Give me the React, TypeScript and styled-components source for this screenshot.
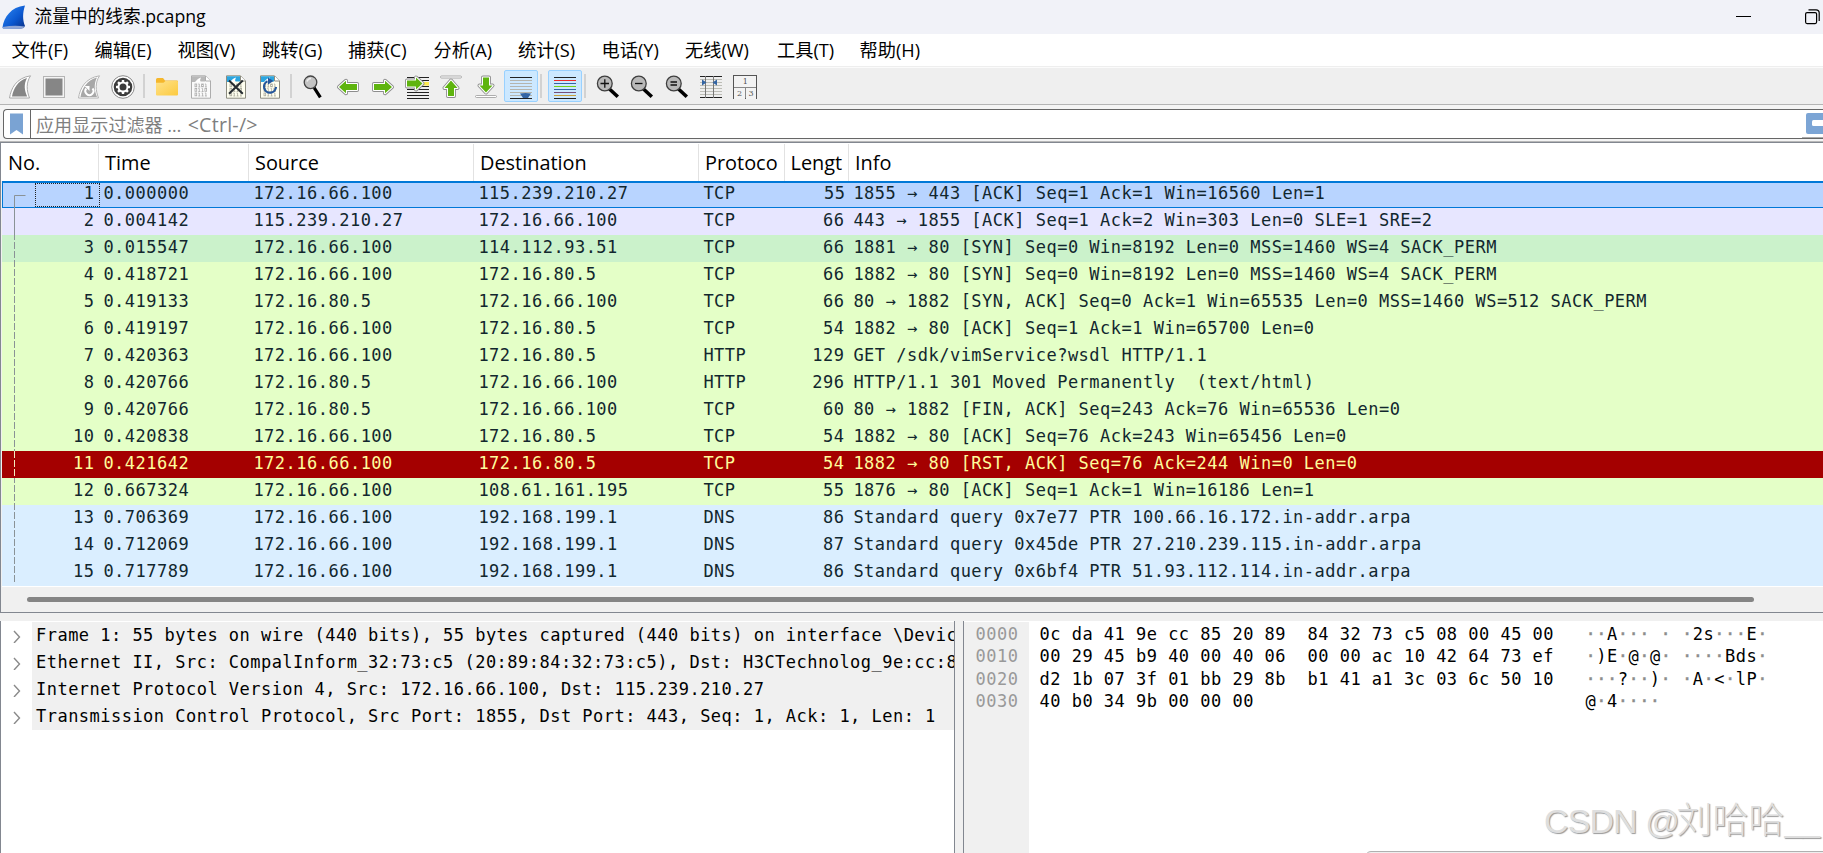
import React from "react";
import styled, { createGlobalStyle, css } from "styled-components";

const ui = `"Open Sans", "Noto Sans CJK SC", sans-serif`;
const mono = `"DejaVu Sans Mono", monospace`;

const Global = createGlobalStyle`
  * { box-sizing: border-box; }
  html, body { margin: 0; background: #f0f0f0; overflow: hidden; }
`;

const Window = styled.div`
  position: relative;
  width: 1823px;
  height: 853px;
  overflow: hidden;
  display: flex;
  flex-direction: column;
  background: #f0f0f0;
  font-family: ${ui};
  color: #000;
`;

const TitleBar = styled.header`
  height: 34px;
  flex: none;
  display: flex;
  align-items: center;
  background: #f1f2f8;
  padding: 0 3px 0 2px;
`;
const Title = styled.span`
  flex: 1;
  margin-left: 8.5px;
  font-size: 17.7px;
  line-height: 33px;
  height: 34px;
  white-space: nowrap;
`;
const WindowControls = styled.div`
  display: flex;
  align-items: center;
  gap: 54px;
`;

const MenuBar = styled.nav`
  height: 34px;
  flex: none;
  display: flex;
  background: #fff;
  border-bottom: 1px solid #fbfbfb;
  box-shadow: inset 0 -1px 0 #eee;
  padding-left: 11.5px;
`;
const MenuItem = styled.span<{ $w: number }>`
  width: ${(p) => p.$w}px;
  flex: none;
  font-size: 18.2px;
  line-height: 33px;
  white-space: nowrap;
`;

const ToolBar = styled.div`
  height: 37px;
  flex: none;
  display: flex;
  align-items: center;
  padding-left: 2.8px;
  background: #efefef;
  border-bottom: 1px solid #b4b4b4;
`;
const ToolButton = styled.button<{ $on?: boolean }>`
  width: 34.4px;
  height: 32px;
  flex: none;
  display: flex;
  align-items: center;
  justify-content: center;
  border: 1px solid transparent;
  border-radius: 2px;
  background: none;
  padding: 2px 0 0;
  ${(p) =>
    p.$on &&
    css`
      background: #cce8ff;
      border-color: #99d1ff;
      margin: 0 -0.8px 0 0.8px;
    `}
`;
const ToolSep = styled.i`
  width: 9.4px;
  flex: none;
  display: flex;
  &::before {
    content: "";
    width: 2px;
    height: 24px;
    margin-left: 3px;
    background: #d2d2d2;
  }
`;

const FilterArea = styled.div`
  height: 37px;
  flex: none;
  padding: 4px 0 2px 3px;
  background: #f4f4f4;
  border-bottom: 1px solid #b8b8b8;
`;
const FilterBox = styled.div`
  height: 30px;
  display: flex;
  border: 1px solid #666;
  border-right: 0;
  border-radius: 4px 0 0 4px;
  background: #fff;
`;
const BookmarkSlot = styled.div`
  width: 27px;
  display: flex;
  align-items: center;
  justify-content: center;
  padding-right: 1px;
  border-right: 1px solid #666;
`;
const Placeholder = styled.span`
  flex: 1;
  padding-left: 5px;
  font-size: 18.1px;
  line-height: 30px;
  height: 28px;
  color: #7f7f7f;
  white-space: pre;
`;
const Shortcut = styled.span`
  margin-left: 1.5px;
  font-size: 19.6px;
  letter-spacing: 0.25px;
`;
const ClearSlot = styled.div`
  width: 21px;
  display: flex;
  align-items: center;
  padding-left: 4px;
  border-bottom: 1px solid #aaa;
`;

const PacketList = styled.section`
  height: 471px;
  flex: none;
  display: flex;
  flex-direction: column;
  position: relative;
  border-top: 1px solid #828790;
  border-left: 1px solid #828790;
  border-bottom: 1px solid #828790;
  padding-left: 1px;
  background: #f0f0f0;
`;
const columns = "97px 150px 225px 225px 85.5px 64.5px 1fr";
const HeaderRow = styled.div`
  display: grid;
  grid-template-columns: ${columns};
  height: 38px;
  margin-left: -1px;
  padding-left: 1px;
  flex: none;
  background: #fff;
`;
const HeaderCell = styled.div`
  padding-left: 6px;
  margin-top: 1px;
  border-right: 1px solid #e2e2e2;
  font-size: 19.9px;
  line-height: 37px;
  white-space: nowrap;
  overflow: hidden;
  &:last-child { border-right: 0; }
`;
const Row = styled.div<{ $bg: string; $fg: string; $sel?: boolean }>`
  display: grid;
  grid-template-columns: ${columns};
  height: 27px;
  flex: none;
  background: ${(p) => p.$bg};
  color: ${(p) => p.$fg};
  border: ${(p) => (p.$sel ? "solid #0078d7" : "0 solid")};
  border-width: ${(p) => (p.$sel ? "2px 0 1px 1px" : 0)};
`;
const Cell = styled.div<{ $right?: boolean; $sel?: boolean }>`
  font-family: ${mono};
  font-size: 17px;
  letter-spacing: 0.49px;
  line-height: ${(p) => (p.$sel ? 21 : 24)}px;
  padding-left: ${(p) => (p.$sel ? 3.4 : 4.4)}px;
  padding-right: ${(p) => (p.$right ? 4.5 : 0)}px;
  text-align: ${(p) => (p.$right ? "right" : "left")};
  white-space: pre;
`;
const FocusCell = styled(Cell)`
  margin-left: 32px;
  outline: 1px dotted #222;
  outline-offset: -1px;
  padding-right: 5.5px;
`;
const Relation = styled.svg`
  position: absolute;
  left: 0;
  top: 38px;
`;
const ScrollTrack = styled.div`
  flex: 1;
  border-top: 1px solid #fff;
  padding: 10px 69px 0 25px;
`;
const ScrollThumb = styled.div`
  height: 5px;
  border-radius: 3px;
  background: #858585;
`;

const LowerPanes = styled.main`
  flex: 1;
  display: flex;
  padding-top: 8px;
  min-height: 0;
`;
const Details = styled.section`
  width: 955px;
  flex: none;
  padding-top: 1px;
  border-left: 1px solid #828790;
  border-right: 1px solid #828790;
  background: #fff;
  overflow: hidden;
`;
const DetailRow = styled.div`
  height: 27px;
  display: flex;
  align-items: center;
  padding-left: 12px;
`;
const DetailText = styled.span`
  flex: 1;
  margin-left: 11px;
  padding-left: 4px;
  background: #f0f0f0;
  font-family: ${mono};
  font-size: 17px;
  letter-spacing: 0.477px;
  line-height: 26px;
  height: 27px;
  white-space: pre;
  overflow: hidden;
`;
const Bytes = styled.section`
  flex: 1;
  margin-left: 8px;
  display: flex;
  border-left: 1px solid #828790;
  background: #fff;
  font-family: ${mono};
  font-size: 17px;
  letter-spacing: 0.485px;
  line-height: 22.4px;
  white-space: pre;
`;
const Offsets = styled.div`
  width: 65px;
  margin-top: 1px;
  padding: 1px 0 0 11.5px;
  background: #f0f0f0;
  color: #999;
`;
const Hex = styled.div`
  width: 546px;
  margin: 2px 0 0 10.5px;
`;
const Ascii = styled.div`
  margin-top: 2px;
`;
const Dot = styled.span`
  color: #8c8c8c;
  -webkit-text-stroke: 0.4px #8c8c8c;
`;
const Watermark = styled.div`
  position: absolute;
  left: 1544px;
  top: 794px;
  display: flex;
  font-family: "Liberation Sans", "Noto Sans CJK SC", sans-serif;
  font-weight: 300;
  font-size: 36px;
  line-height: 54px;
  color: #dedede;
  text-shadow: 1px 1px 1px #999;
  white-space: pre;
`;
const WatermarkLatin = styled.span`
  width: 132.5px;
  font-size: 34px;
  letter-spacing: -0.9px;
`;
const WatermarkTail = styled.span`
  font-size: 32px;
`;
const PopupEdge = styled.div`
  position: absolute;
  left: 1365px;
  right: -12px;
  top: 851px;
  height: 12px;
  border: 1px solid #b0b0b0;
  border-radius: 8px;
  background: #eee;
`;

const Svg = ({ children }: { children: React.ReactNode }) => (
  <svg width="24" height="24" viewBox="0 0 24 24" fill="none">{children}</svg>
);
const fin = "M1.500 23C3 13.500 8 3 22.500 .8C18 8 18.500 15 21.500 23Z";
const finCore = "M4 21.500C5.500 13.500 9.500 6 19 3C15.500 9.500 16.500 15.500 19.200 21.500Z";

const StartIcon = () => (
  <Svg>
    <path d={fin} fill="#fff" stroke="#aaa" />
    <path d={finCore} fill="#868686" />
  </Svg>
);
const StopIcon = () => (
  <Svg>
    <rect x="1.500" y="1.500" width="21" height="21" fill="#f4f4f4" stroke="#b4b4b4" />
    <rect x="3.500" y="3.500" width="17" height="17" fill="#868686" />
  </Svg>
);
const RestartIcon = () => (
  <Svg>
    <path d={fin} fill="#fff" stroke="#b4b4b4" />
    <path d="M3.500 22C5 13.500 9.500 5.500 20 2.500C16.500 9.500 17.500 15.500 20 22Z" fill="#a8a8a8" />
    <path d="M9.300 13.500a4 4 0 1 0 6.200 0" stroke="#fff" strokeWidth="2" />
    <path d="M7.500 11h5v5z" fill="#fff" />
  </Svg>
);
const OptionsIcon = () => (
  <Svg>
    <circle cx="12" cy="12" r="11.300" fill="#fff" stroke="#8a8a8a" />
    <circle cx="12" cy="12" r="9.300" fill="#3c3c3c" />
    <circle cx="12" cy="12" r="4.500" stroke="#fff" strokeWidth="2" />
    {[0, 45, 90, 135, 180, 225, 270, 315].map((a) => (
      <path key={a} d="M12 7.500V5" stroke="#fff" strokeWidth="2.400" transform={`rotate(${a} 12 12)`} />
    ))}
  </Svg>
);
const FolderIcon = () => (
  <Svg>
    <path d="M1 4.500Q1 3 2.500 3H8L10 5.500H22Q23 5.500 23 6.500V10H1Z" fill="#f5b72c" />
    <path d="M1 7.800H8.500L10.500 6H22Q23 6 23 7V19.500Q23 20.500 22 20.500H2Q1 20.500 1 19.500Z" fill="url(#fold)" />
    <defs>
      <linearGradient id="fold" x1="0" y1="0" x2="1" y2="1">
        <stop stopColor="#ffe28a" />
        <stop offset="1" stopColor="#fcca3f" />
      </linearGradient>
    </defs>
  </Svg>
);
const FileIcon = ({ grey, children }: { grey?: boolean; children?: React.ReactNode }) => (
  <Svg>
    <path d="M2.500 .8H16.500L21.500 6V23.200H2.500Z" fill={grey ? "#fafafa" : "#fffff0"} stroke={grey ? "#adadad" : "#8c8c80"} />
    <path d="M3 1.300H16V6.500H11.500Q9 4 6 7H3Z" fill={grey ? "#b8b8b8" : "#2ba5e0"} />
    <path d="M6.500 7Q8 3.500 12 2.500Q10.500 5 11.500 7Z" fill="#fff" />
    <path d="M16.500 1V6H21.500" fill="#fff" stroke={grey ? "#adadad" : "#8c8c80"} />
    <g stroke={grey ? "#aaa" : "#a9a99b"} strokeWidth=".8">
      {[9, 13.5, 18].map((y, r) =>
        [0, 1, 2, 3].map((c) => {
          const x = 6 + c * 3.3;
          const zero = [c % 2 === 0, c === 0 || c === 3, c === 0][r];
          return zero ? <rect key={`${r}${c}`} x={x} y={y} width="1.700" height="2.800" /> : <path key={`${r}${c}`} d={`M${x} ${y}h1v3M${x} ${y + 3}h2`} />;
        })
      )}
    </g>
    {children}
  </Svg>
);
const CloseMark = () => <path d="M5 5.500L18.800 18.800M18.800 5.500L5 18.800" stroke="#262c31" strokeWidth="2" />;
const ReloadMark = () => (
  <>
    <path d="M9.500 6.200A6 6 0 1 0 18 12" stroke="#24579b" strokeWidth="2.200" />
    <path d="M10 2.500V9.500L15.500 6Z" fill="#24579b" />
  </>
);
const Lens = ({ mark }: { mark?: string }) => (
  <Svg>
    <path d="M14 14.500L20.500 20.500" stroke="#000" strokeWidth="3.600" strokeLinecap="square" />
    <circle cx="8.800" cy="8.500" r="7.400" fill="#b9b9b9" stroke="#3e3e3e" strokeWidth="1.300" />
    {mark && <path d={mark} stroke="#111" strokeWidth="1.300" />}
  </Svg>
);
const FindIcon = () => (
  <Svg>
    <path d="M13 14L17.500 21" stroke="#000" strokeWidth="3.200" strokeLinecap="square" />
    <circle cx="8.500" cy="7.300" r="6.300" fill="#c4c4c4" stroke="#444" strokeWidth="1.300" />
    <path d="M5 6.500Q6 3.500 9 3.500" stroke="#eee" strokeWidth="1.500" />
  </Svg>
);
const GreenArrow = ({ d }: { d: string }) => (
  <>
    <path d={d} fill="#fff" stroke="#8d8d8d" strokeWidth="4" strokeLinejoin="round" />
    <path d={d} fill="#5fb40f" stroke="#fff" strokeWidth="2.200" strokeLinejoin="round" />
    <path d={d} fill="#5fb40f" />
  </>
);
const BackIcon = () => <Svg><GreenArrow d="M3 12L10 5.800V9H21V15H10V18.200Z" /></Svg>;
const NextIcon = () => <Svg><GreenArrow d="M21 12L14 5.800V9H3V15H14V18.200Z" /></Svg>;
const GotoIcon = () => (
  <Svg>
    <path d="M2 2.500H24M2 14.500H24M2 17.500H24M2 20.500H24M2 23.500H24" stroke="#222" />
    <path d="M2 5.500H24M15 11.500H24" stroke="#222" />
    <rect x="15" y="7" width="9" height="3.500" fill="#fce94f" />
    <GreenArrow d="M17.500 8.500L11 2.500V5.500H2V11.500H11V14.500Z" />
  </Svg>
);
const FirstIcon = () => (
  <Svg>
    <rect x="1.500" y="1" width="21" height="2" rx="1" fill="#fff" stroke="#999" strokeWidth=".8" />
    <GreenArrow d="M12 5.500L18.500 13H15V21H9V13H5.500Z" />
  </Svg>
);
const LastIcon = () => (
  <Svg>
    <rect x="1.500" y="20.500" width="21" height="2" rx="1" fill="#fff" stroke="#999" strokeWidth=".8" />
    <GreenArrow d="M12 17.500L18.500 10.500H15V2.500H9V10.500H5.500Z" />
  </Svg>
);
const AutoScrollIcon = () => (
  <Svg>
    <path d="M1 2.500H23M1 23.500H23" stroke="#222" />
    <path d="M1 5.500H23M1 8.500H23M1 11.500H23M1 14.500H23M1 17.500H23M1 20.500H23" stroke="#b5b5ad" />
    <path d="M11 18.500Q16.500 17.500 22 18.500L19 23H14Z" fill="#3465a4" />
  </Svg>
);
const ColorizeIcon = () => (
  <Svg>
    {["#222", "#ef2929", "#3465a4", "#73d216", "#3465a4", "#75507b", "#c9a13b", "#222"].map((c, i) => (
      <path key={i} d={`M1 ${2.5 + i * 3}H23`} stroke={c} />
    ))}
  </Svg>
);
const ColumnsIcon = () => (
  <Svg>
    <path d="M1 1.500H23M1 22.500H23" stroke="#222" />
    <path d="M1 4.500H23M1 7.500H23M1 10.500H23M1 13.500H23M1 16.500H23M1 19.500H23" stroke="#bdbdb6" />
    <path d="M6.500 1V23M14.500 1V23" stroke="#777" />
    <path d="M3 4.500L7.500 7.500L3 10.500ZM18 4.500L13.500 7.500L18 10.500Z" fill="#3465a4" />
  </Svg>
);
const LayoutGlyph = styled.span`
  width: 24px;
  height: 24px;
  display: grid;
  grid-template-columns: 1fr 1fr;
  gap: 1px;
  border: 1px solid #555;
  background: #888;
  font: 8px/11px "DejaVu Serif", serif;
  color: #555;
  text-align: center;
  & > b { font-weight: 400; background: #f3f3f3; }
  & > b:first-child { grid-column: 1 / 3; }
`;

const green = "#e4ffc7";
const blue = "#daeeff";
const ink = "#12272e";
type Packet = [string, string, string, string, string, string, string, string];
const packets: Packet[] = [
  ["1", "0.000000", "172.16.66.100", "115.239.210.27", "TCP", "55", "1855 → 443 [ACK] Seq=1 Ack=1 Win=16560 Len=1", "#b8d4ff"],
  ["2", "0.004142", "115.239.210.27", "172.16.66.100", "TCP", "66", "443 → 1855 [ACK] Seq=1 Ack=2 Win=303 Len=0 SLE=1 SRE=2", "#e7e6ff"],
  ["3", "0.015547", "172.16.66.100", "114.112.93.51", "TCP", "66", "1881 → 80 [SYN] Seq=0 Win=8192 Len=0 MSS=1460 WS=4 SACK_PERM", "#cbf2cb"],
  ["4", "0.418721", "172.16.66.100", "172.16.80.5", "TCP", "66", "1882 → 80 [SYN] Seq=0 Win=8192 Len=0 MSS=1460 WS=4 SACK_PERM", green],
  ["5", "0.419133", "172.16.80.5", "172.16.66.100", "TCP", "66", "80 → 1882 [SYN, ACK] Seq=0 Ack=1 Win=65535 Len=0 MSS=1460 WS=512 SACK_PERM", green],
  ["6", "0.419197", "172.16.66.100", "172.16.80.5", "TCP", "54", "1882 → 80 [ACK] Seq=1 Ack=1 Win=65700 Len=0", green],
  ["7", "0.420363", "172.16.66.100", "172.16.80.5", "HTTP", "129", "GET /sdk/vimService?wsdl HTTP/1.1", green],
  ["8", "0.420766", "172.16.80.5", "172.16.66.100", "HTTP", "296", "HTTP/1.1 301 Moved Permanently  (text/html)", green],
  ["9", "0.420766", "172.16.80.5", "172.16.66.100", "TCP", "60", "80 → 1882 [FIN, ACK] Seq=243 Ack=76 Win=65536 Len=0", green],
  ["10", "0.420838", "172.16.66.100", "172.16.80.5", "TCP", "54", "1882 → 80 [ACK] Seq=76 Ack=243 Win=65456 Len=0", green],
  ["11", "0.421642", "172.16.66.100", "172.16.80.5", "TCP", "54", "1882 → 80 [RST, ACK] Seq=76 Ack=244 Win=0 Len=0", "#a40000"],
  ["12", "0.667324", "172.16.66.100", "108.61.161.195", "TCP", "55", "1876 → 80 [ACK] Seq=1 Ack=1 Win=16186 Len=1", green],
  ["13", "0.706369", "172.16.66.100", "192.168.199.1", "DNS", "86", "Standard query 0x7e77 PTR 100.66.16.172.in-addr.arpa", blue],
  ["14", "0.712069", "172.16.66.100", "192.168.199.1", "DNS", "87", "Standard query 0x45de PTR 27.210.239.115.in-addr.arpa", blue],
  ["15", "0.717789", "172.16.66.100", "192.168.199.1", "DNS", "86", "Standard query 0x6bf4 PTR 51.93.112.114.in-addr.arpa", blue],
];

const menus: [string, number][] = [
  ["文件(F)", 83], ["编辑(E)", 83], ["视图(V)", 84.5], ["跳转(G)", 86], ["捕获(C)", 85.5], ["分析(A)", 84.5],
  ["统计(S)", 83.5], ["电话(Y)", 83.5], ["无线(W)", 92], ["工具(T)", 82.5], ["帮助(H)", 80],
];

const tools: (React.ReactNode | "|")[] = [
  <StartIcon />, <StopIcon />, <RestartIcon />, <OptionsIcon />, "|",
  <FolderIcon />, <FileIcon grey />, <FileIcon><CloseMark /></FileIcon>, <FileIcon><ReloadMark /></FileIcon>, "|",
  <FindIcon />, <BackIcon />, <NextIcon />, <GotoIcon />, <FirstIcon />, <LastIcon />, <AutoScrollIcon />, "|",
  <ColorizeIcon />, "|",
  <Lens mark="M4.500 8.500H13M8.800 4.200V12.800" />, <Lens mark="M5 8.500H12.500" />, <Lens mark="M5.500 7H12M5.500 10H12" />,
  <ColumnsIcon />, <LayoutGlyph><b>1</b><b>2</b><b>3</b></LayoutGlyph>,
];
const pressed = [16, 18];

const details = [
  "Frame 1: 55 bytes on wire (440 bits), 55 bytes captured (440 bits) on interface \\Devic",
  "Ethernet II, Src: CompalInform_32:73:c5 (20:89:84:32:73:c5), Dst: H3CTechnolog_9e:cc:8",
  "Internet Protocol Version 4, Src: 172.16.66.100, Dst: 115.239.210.27",
  "Transmission Control Protocol, Src Port: 1855, Dst Port: 443, Seq: 1, Ack: 1, Len: 1",
];
const dump = [
  ["0000", "0c da 41 9e cc 85 20 89  84 32 73 c5 08 00 45 00", "··A··· · ·2s···E·"],
  ["0010", "00 29 45 b9 40 00 40 06  00 00 ac 10 42 64 73 ef", "·)E·@·@· ····Bds·"],
  ["0020", "d2 1b 07 3f 01 bb 29 8b  b1 41 a1 3c 03 6c 50 10", "···?··)· ·A·<·lP·"],
  ["0030", "40 b0 34 9b 00 00 00", "@·4····"],
];

export default function App() {
  return (
    <Window>
      <Global />
      <TitleBar>
        <svg width="24" height="24" viewBox="0 0 24 24">
          <defs>
            <linearGradient id="shark" x1="0" y1="0" x2="1" y2="1">
              <stop stopColor="#2f8af5" />
              <stop offset=".6" stopColor="#0b57cf" />
              <stop offset="1" stopColor="#0a2f86" />
            </linearGradient>
          </defs>
          <path d="M.5 22.500C2 12 9 2 23 .5C20.500 8 20.500 15 23 21Q22 23.500 19 23.500H1Z" fill="url(#shark)" />
          <path d="M.5 22Q12 20 22.800 21.500Q22 23.500 19 23.500H1Z" fill="#8fa6d6" />
        </svg>
        <Title>流量中的线索.pcapng</Title>
        <WindowControls>
          <svg width="15" height="16" viewBox="0 0 15 16"><path d="M0 7.500H15" stroke="#000" /></svg>
          <svg width="15" height="16" viewBox="0 0 15 16" fill="none" stroke="#000" strokeWidth="1.200">
            <rect x=".6" y="3.600" width="11" height="11" rx="1.500" />
            <path d="M3.500 .9H11Q14.200 .9 14.200 4V12" />
          </svg>
        </WindowControls>
      </TitleBar>
      <MenuBar>
        {menus.map(([t, w]) => <MenuItem key={t} $w={w}>{t}</MenuItem>)}
      </MenuBar>
      <ToolBar>
        {tools.map((t, i) => (t === "|" ? <ToolSep key={i} /> : <ToolButton key={i} $on={pressed.includes(i)}>{t}</ToolButton>))}
      </ToolBar>
      <FilterArea>
        <FilterBox>
          <BookmarkSlot>
            <svg width="13" height="22" viewBox="0 0 13 22"><path d="M0 .5H13V21.500L6.500 17L0 21.500Z" fill="#7aa3d3" /></svg>
          </BookmarkSlot>
          <Placeholder>应用显示过滤器 … <Shortcut>&lt;Ctrl-/&gt;</Shortcut></Placeholder>
          <ClearSlot>
            <svg width="17" height="21" viewBox="0 0 17 21">
              <path d="M2 0H17V21H2Q0 21 0 19V2Q0 0 2 0Z" fill="#7ca5d5" />
              <path d="M7.500 7H17V13H7.500Q6 13 6 11.500V8.500Q6 7 7.500 7Z" fill="#fff" />
            </svg>
          </ClearSlot>
        </FilterBox>
      </FilterArea>
      <PacketList>
        <HeaderRow>
          {["No.", "Time", "Source", "Destination", "Protoco", "Lengt", "Info"].map((h) => <HeaderCell key={h}>{h}</HeaderCell>)}
        </HeaderRow>
        {packets.map(([no, time, src, dst, proto, len, info, bg], i) => {
          const sel = i === 0;
          return (
            <Row key={no} $bg={bg} $fg={i === 10 ? "#fffc9c" : ink} $sel={sel}>
              {sel ? <FocusCell $right $sel>{no}</FocusCell> : <Cell $right>{no}</Cell>}
              <Cell $sel={sel}>{time}</Cell>
              <Cell $sel={sel}>{src}</Cell>
              <Cell $sel={sel}>{dst}</Cell>
              <Cell $sel={sel}>{proto}</Cell>
              <Cell $sel={sel} $right>{len}</Cell>
              <Cell $sel={sel}>{info}</Cell>
            </Row>
          );
        })}
        <Relation width="40" height="405" viewBox="0 0 40 405" fill="none" stroke="#8a9296">
          <path d="M24.500 14.500H13.500V59" />
          <path d="M13.500 61V403" strokeDasharray="7 2" />
          <path d="M13.500 270V297" stroke="#a40000" strokeWidth="2" />
          <path d="M13.500 270V297" stroke="#f3ecc0" strokeDasharray="7 2" />
        </Relation>
        <ScrollTrack><ScrollThumb /></ScrollTrack>
      </PacketList>
      <LowerPanes>
        <Details>
          {details.map((d) => (
            <DetailRow key={d}>
              <svg width="8" height="14" viewBox="0 0 8 14"><path d="M1 2L6.500 8L1 14" fill="none" stroke="#8a8a8a" strokeWidth="1.400" /></svg>
              <DetailText>{d}</DetailText>
            </DetailRow>
          ))}
        </Details>
        <Bytes>
          <Offsets>{dump.map(([o]) => <div key={o}>{o}</div>)}</Offsets>
          <Hex>{dump.map(([o, h]) => <div key={o}>{h}</div>)}</Hex>
          <Ascii>
            {dump.map(([o, , a]) => (
              <div key={o}>{a.split(/(·+)/).map((s, i) => (s.startsWith("·") ? <Dot key={i}>{s}</Dot> : s))}</div>
            ))}
          </Ascii>
        </Bytes>
      </LowerPanes>
      <Watermark>
        <WatermarkLatin>CSDN @</WatermarkLatin>
        <span>刘哈哈</span>
        <WatermarkTail>__</WatermarkTail>
      </Watermark>
      <PopupEdge />
    </Window>
  );
}
